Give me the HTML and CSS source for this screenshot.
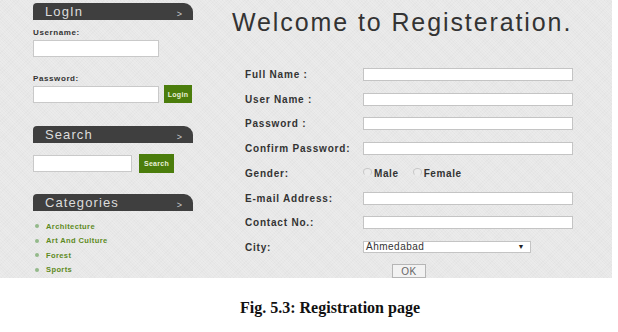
FILE: index.html
```html
<!DOCTYPE html>
<html lang="en">
<head>
    <meta charset="UTF-8">
    <title>Registration</title>
    <link rel="stylesheet" href="styles.css">
</head>
<body>
    <div class="site">
        <aside class="sidebar">
            <div class="box-title">LogIn <span class="arrow">&gt;</span></div>
            <label class="side-label first">Username:</label>
            <input class="side-input" type="text">
            <label class="side-label">Password:</label>
            <div class="side-row">
                <input class="side-input" type="password">
                <button class="green-btn login-btn">Login</button>
            </div>

            <div class="box-title">Search <span class="arrow">&gt;</span></div>
            <div class="side-row search-row">
                <input class="search-input" type="text">
                <button class="green-btn search-btn">Search</button>
            </div>

            <div class="box-title">Categories <span class="arrow">&gt;</span></div>
            <ul class="cat-list">
                <li>Architecture</li>
                <li>Art And Culture</li>
                <li>Forest</li>
                <li>Sports</li>
            </ul>
        </aside>

        <main class="content">
            <h1>Welcome to Registeration.</h1>
            <form class="reg-form">
                <label>Full Name :</label>
                <input type="text">
                <label>User Name :</label>
                <input type="text">
                <label>Password :</label>
                <input type="password">
                <label>Confirm Password:</label>
                <input type="password">
                <label>Gender:</label>
                <div class="gender">
                    <span class="radio"></span><span class="opt">Male</span>
                    <span class="radio"></span><span class="opt">Female</span>
                </div>
                <label>E-mail Address:</label>
                <input type="text">
                <label>Contact No.:</label>
                <input type="text">
                <label>City:</label>
                <div class="select">Ahmedabad <span class="caret">&#9660;</span></div>
                <span></span>
                <div class="ok-cell"><button type="button" class="ok-btn">OK</button></div>
            </form>
        </main>
    </div>
    <p class="caption">Fig. 5.3: Registration page</p>
</body>
</html>
```

FILE: styles.css
```css
body {
    margin: 0;
    background: white;
    font-family: "Liberation Sans", Arial, sans-serif;
    color: #333;
}
.site {
    width: 612px;
    height: 278px;
    display: flex;
    background-color: #e7e7e7;
    background-image:
        repeating-linear-gradient(45deg, rgba(255, 255, 255, 0.18) 0 1px, transparent 1px 2px),
        repeating-linear-gradient(-45deg, rgba(0, 0, 0, 0.015) 0 1px, transparent 1px 3px);
}

/* Sidebar */
.sidebar {
    width: 160px;
    margin-left: 33px;
    display: flex;
    flex-direction: column;
    align-items: flex-start;
}
.box-title {
    width: 148px;
    height: 17px;
    padding-left: 12px;
    margin-top: 3px;
    background-color: #3f3f3f;
    border-radius: 4px 9px 0 0;
    color: #dcdcdc;
    font-size: 13px;
    letter-spacing: 1.1px;
    line-height: 17px;
    display: flex;
    justify-content: space-between;
}
.box-title .arrow {
    font-size: 9px;
    margin-right: 10px;
    padding-top: 3px;
    color: #ccc;
}
.side-label {
    font-size: 8px;
    font-weight: bold;
    letter-spacing: 0.6px;
    line-height: 10px;
    margin-top: 17px;
    margin-bottom: 1px;
}
.side-label.first {
    margin-top: 8px;
    margin-bottom: 2px;
}
.side-input,
.search-input {
    box-sizing: border-box;
    width: 126px;
    height: 17px;
    margin: 0;
    border: 1px solid #c9c9c9;
    background: white;
}
.side-row {
    display: flex;
    align-items: center;
    gap: 5px;
    margin-bottom: 20px;
}
.green-btn {
    box-sizing: border-box;
    height: 18px;
    padding: 0;
    border: none;
    background-color: #4b7d0c;
    color: #e8f0d8;
    font-family: "Liberation Sans", Arial, sans-serif;
    font-size: 7px;
    font-weight: bold;
    letter-spacing: 0.3px;
}
.login-btn {
    width: 28px;
}
.search-row {
    margin-top: 11px;
    margin-bottom: 18px;
    gap: 7px;
}
.search-input {
    width: 99px;
}
.search-btn {
    width: 35px;
    height: 19px;
}
.cat-list {
    list-style: none;
    margin: 8px 0 0;
    padding: 0;
}
.cat-list li {
    display: flex;
    align-items: center;
    height: 14.5px;
    font-size: 7.5px;
    font-weight: bold;
    letter-spacing: 0.4px;
    color: #5d8a22;
}
.cat-list li::before {
    content: "";
    width: 4px;
    height: 4px;
    margin: 0 7px 0 2px;
    border-radius: 50%;
    background-color: #93b98a;
}

/* Registration form */
.content {
    margin-left: 39px;
}
h1 {
    margin: 7px 0 31px;
    font-size: 25px;
    font-weight: normal;
    letter-spacing: 1.9px;
    line-height: 30px;
    color: #333;
}
.reg-form {
    padding-left: 13px;
    display: grid;
    grid-template-columns: 118px 210px;
    grid-template-rows: repeat(4, 13px) 14px repeat(3, 13px) 14px;
    row-gap: 11.5px;
    align-items: center;
}
.reg-form label {
    font-size: 10px;
    font-weight: bold;
    letter-spacing: 0.8px;
    color: #333;
}
.reg-form input {
    box-sizing: border-box;
    width: 210px;
    height: 13px;
    margin: 0;
    border: 1px solid #c4c4c4;
    background: white;
}
.gender {
    display: flex;
    align-items: center;
    font-size: 10px;
    font-weight: bold;
    letter-spacing: 0.6px;
}
.radio {
    width: 7px;
    height: 6px;
    margin-top: -3px;
    border: 1px solid #c8c8c8;
    border-bottom-color: transparent;
    border-radius: 50%;
    background-color: #ececec;
}
.opt {
    margin: 0 14px 0 2px;
}
.select {
    box-sizing: border-box;
    width: 168px;
    height: 12px;
    padding: 0 5px 0 2px;
    border: 1px solid #c4c4c4;
    background: white;
    font-size: 10px;
    line-height: 10px;
    letter-spacing: 0.5px;
    display: flex;
    justify-content: space-between;
}
.caret {
    font-size: 7px;
    color: #222;
}
.reg-form > span {
    display: block;
}
.ok-cell {
    margin-top: -5px;
    padding-left: 29px;
}
.ok-btn {
    width: 34px;
    height: 14px;
    padding: 0;
    border: 1px solid #b5b5b5;
    background-color: #f2f2f2;
    color: #666;
    font-family: "Liberation Sans", Arial, sans-serif;
    font-size: 10px;
    letter-spacing: 0.5px;
}

.caption {
    margin: 21px 0 0;
    padding-left: 42px;
    text-align: center;
    font-family: "Liberation Serif", "Times New Roman", serif;
    font-size: 16px;
    font-weight: bold;
    line-height: 18px;
    color: #111;
}
```
